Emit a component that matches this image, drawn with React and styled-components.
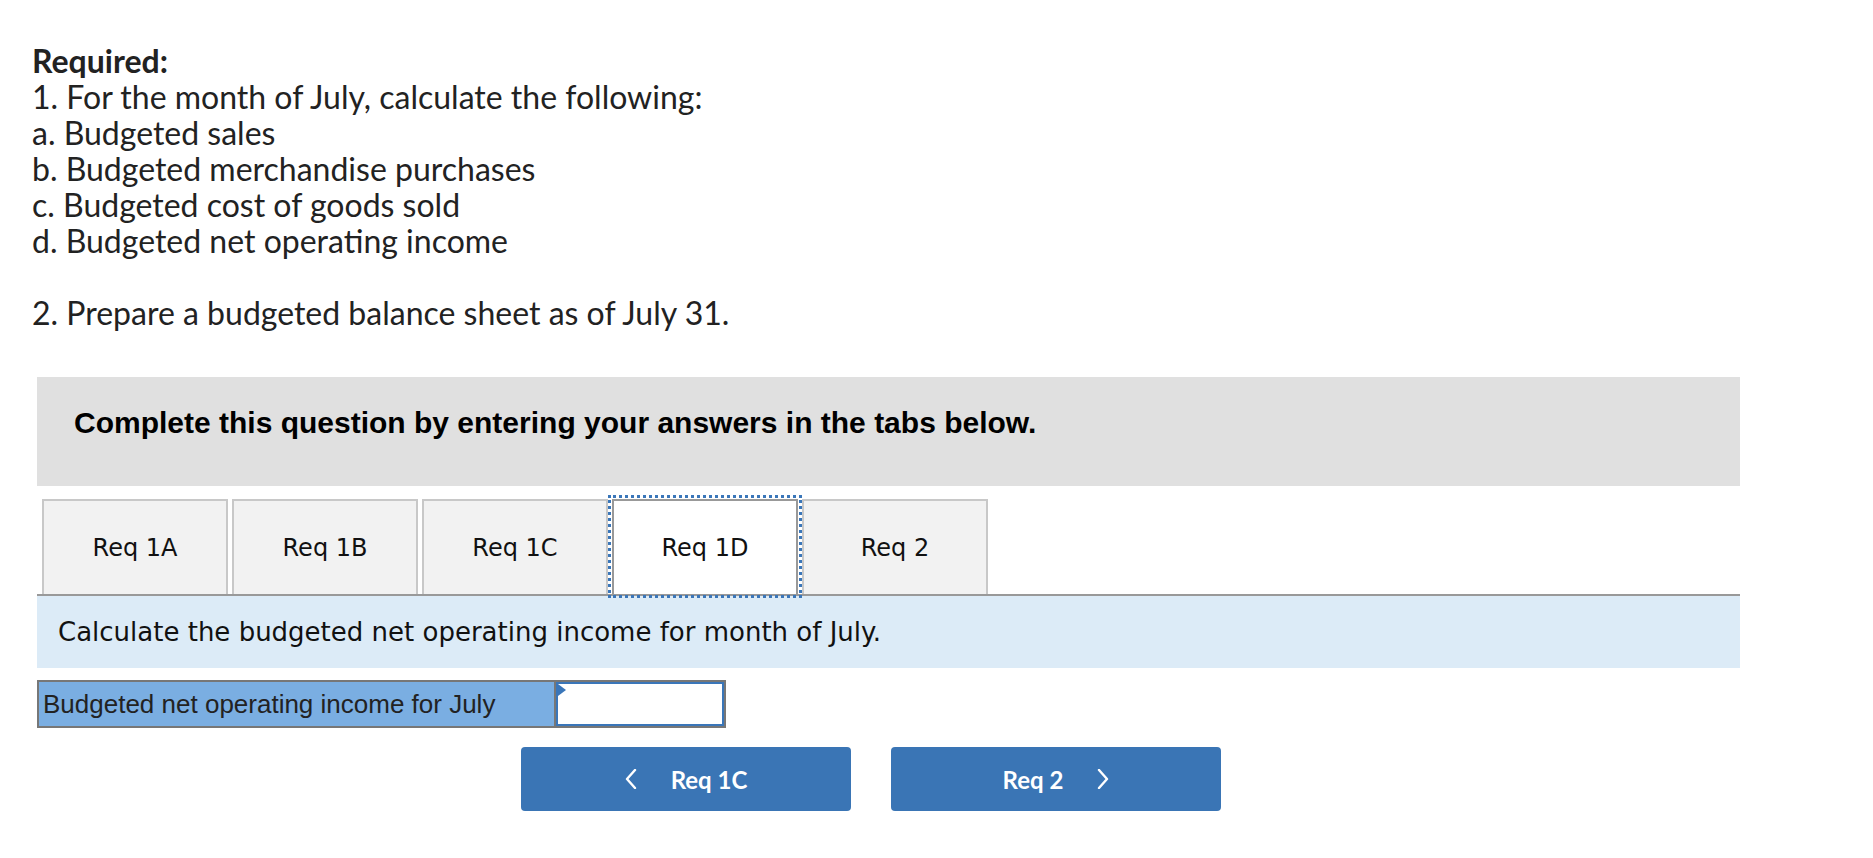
import styled, { createGlobalStyle } from 'styled-components'

const GlobalStyle = createGlobalStyle`
  body {
    margin: 0;
    background: #fff;
    font-family: "Liberation Sans", Arial, sans-serif;
  }
`

const Page = styled.div`
  width: 1873px;
  height: 858px;
  padding-top: 43px;
  box-sizing: border-box;
`

const Intro = styled.div`
  padding-left: 32px;
  font-family: "Lato", "Open Sans", sans-serif;
  font-size: 32px;
  line-height: 36px;
  color: #222;
`

const Line = styled.div`
  font-weight: ${p => (p.$bold ? 700 : 400)};
  min-height: 36px;
`

const Section = styled.div`
  margin: 46px 0 0 37px;
  width: 1703px;
`

const Banner = styled.div`
  background: #e0e0e0;
  height: 109px;
  box-sizing: border-box;
  padding: 28px 37px 0;
  font-family: "Liberation Sans", Arial, sans-serif;
  font-weight: 700;
  font-size: 30px;
  line-height: 36px;
  color: #000;
`

const TabBar = styled.div`
  display: flex;
  gap: 4px;
  margin-top: 13px;
  padding-left: 5px;
  border-bottom: 2px solid #999;
`

const Tab = styled.div`
  width: 186px;
  height: 95px;
  box-sizing: border-box;
  display: flex;
  align-items: center;
  justify-content: center;
  background: ${p => (p.$active ? '#fff' : '#f2f2f2')};
  border: 2px solid ${p => (p.$active ? '#999' : '#c8c8c8')};
  border-bottom: none;
  font-family: "DejaVu Sans", Verdana, sans-serif;
  font-size: 24px;
  color: #111;
  outline: ${p => (p.$active ? '3px dotted #3a76b9' : 'none')};
  outline-offset: 1px;
  position: relative;
  z-index: ${p => (p.$active ? 1 : 0)};
`

const Instructions = styled.div`
  background: #dcebf7;
  height: 72px;
  display: flex;
  align-items: center;
  padding-left: 21px;
  font-family: "DejaVu Sans", Verdana, sans-serif;
  font-size: 26px;
  color: #111;
`

const AnswerRow = styled.div`
  display: flex;
  width: 689px;
  height: 48px;
  box-sizing: border-box;
  margin-top: 12px;
  border: 2px solid #777;
`

const AnswerLabel = styled.div`
  flex: 0 0 517px;
  background: #7aaee2;
  border-right: 2px solid #777;
  display: flex;
  align-items: center;
  padding-left: 4px;
  box-sizing: border-box;
  white-space: nowrap;
  font-family: "Liberation Sans", Arial, sans-serif;
  font-size: 26px;
  color: #222;
`

const InputCell = styled.div`
  flex: 1;
  min-width: 0;
  display: flex;
  position: relative;
  &::before {
    content: '';
    position: absolute;
    left: 2px;
    top: 2px;
    border-top: 6px solid transparent;
    border-bottom: 6px solid transparent;
    border-left: 8px solid #3a76b9;
  }
`

const AnswerInput = styled.input`
  flex: 1;
  width: 100%;
  min-width: 0;
  margin: 0;
  box-sizing: border-box;
  border: 2px solid #3a76b9;
  background: #fff;
  outline: none;
  font-size: 24px;
`

const NavRow = styled.div`
  display: flex;
  gap: 40px;
  margin-top: 19px;
  padding-left: 484px;
`

const NavButton = styled.button`
  width: 330px;
  height: 64px;
  border: none;
  border-radius: 4px;
  background: #3a75b5;
  color: #fff;
  display: flex;
  align-items: center;
  justify-content: center;
  gap: 34px;
  font-family: "Lato", "Open Sans", sans-serif;
  font-weight: 700;
  font-size: 24px;
  cursor: pointer;
`

const Chevron = ({ dir }) => (
  <svg width="12" height="20" viewBox="0 0 12 20" fill="none">
    <path
      d={dir === 'left' ? 'M10 1 L2 10 L10 19' : 'M2 1 L10 10 L2 19'}
      stroke="#fff"
      strokeWidth="2.4"
      strokeLinecap="round"
      strokeLinejoin="round"
    />
  </svg>
)

const tabs = ['Req 1A', 'Req 1B', 'Req 1C', 'Req 1D', 'Req 2']

export default function App() {
  return (
    <Page>
      <GlobalStyle />
      <Intro>
        <Line $bold>Required:</Line>
        <Line>1. For the month of July, calculate the following:</Line>
        <Line>a. Budgeted sales</Line>
        <Line>b. Budgeted merchandise purchases</Line>
        <Line>c. Budgeted cost of goods sold</Line>
        <Line>d. Budgeted net operating income</Line>
        <Line />
        <Line>2. Prepare a budgeted balance sheet as of July 31.</Line>
      </Intro>
      <Section>
        <Banner>Complete this question by entering your answers in the tabs below.</Banner>
        <TabBar>
          {tabs.map(t => (
            <Tab key={t} $active={t === 'Req 1D'}>{t}</Tab>
          ))}
        </TabBar>
        <Instructions>Calculate the budgeted net operating income for month of July.</Instructions>
        <AnswerRow>
          <AnswerLabel>Budgeted net operating income for July</AnswerLabel>
          <InputCell>
            <AnswerInput type="text" />
          </InputCell>
        </AnswerRow>
        <NavRow>
          <NavButton>
            <Chevron dir="left" />
            <span>Req 1C</span>
          </NavButton>
          <NavButton>
            <span>Req 2</span>
            <Chevron dir="right" />
          </NavButton>
        </NavRow>
      </Section>
    </Page>
  )
}
